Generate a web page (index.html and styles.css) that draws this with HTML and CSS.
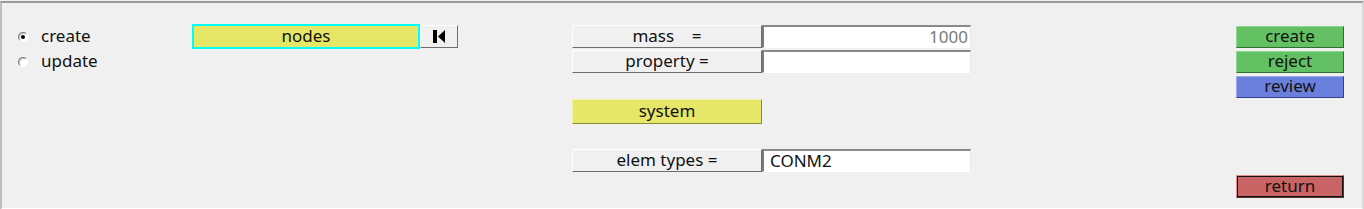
FILE: index.html
```html
<!DOCTYPE html>
<html>
<head>
<meta charset="utf-8">
<link rel="stylesheet" href="styles.css">
</head>
<body>
<div class="panel">
  <div class="col col-radio">
    <label class="radio-row"><span class="radio on"></span><span class="rlabel">create</span></label>
    <label class="radio-row"><span class="radio"></span><span class="rlabel">update</span></label>
  </div>
  <div class="col col-sel">
    <div class="sel-row">
      <div class="btn yellow active">nodes</div>
      <div class="btn icon-btn"><svg width="13" height="13" viewBox="0 0 13 13"><rect x="0" y="0" width="4" height="13" fill="#000"/><polygon points="12,0 12,13 5,6.5" fill="#000"/></svg></div>
    </div>
  </div>
  <div class="col col-form">
    <div class="frow"><div class="btn lbl pre">mass    =</div><div class="field num">1000</div></div>
    <div class="frow"><div class="btn lbl">property =</div><div class="field"></div></div>
    <div class="frow gap1"><div class="btn lbl yellow">system</div></div>
    <div class="frow gap2"><div class="btn lbl">elem types =</div><div class="field txt">CONM2</div></div>
  </div>
  <div class="col col-act">
    <div class="btn act green">create</div>
    <div class="btn act green">reject</div>
    <div class="btn act blue">review</div>
    <div class="spacer"></div>
    <div class="btn act red">return</div>
  </div>
</div>
</body>
</html>
```

FILE: styles.css
```css
html, body {
  margin: 0;
  padding: 0;
  background: #f0f0f0;
}
body {
  font-family: "Noto Sans", "DejaVu Sans", sans-serif;
  font-size: 17px;
  color: #111;
}
.panel {
  box-sizing: border-box;
  width: 1364px;
  height: 209px;
  margin-top: 1px;
  border-top: 2px solid #9a9a9a;
  border-left: 2px solid #bdbdbd;
  border-right: 2px solid #d8d8d8;
  border-bottom: 2px solid #ffffff;
  display: flex;
  padding-top: 19px;
}
.col { display: flex; flex-direction: column; }
.col-radio { width: 190px; padding-left: 16px; box-sizing: border-box; padding-top: 2px; }
.radio-row {
  display: flex;
  align-items: center;
  height: 25px;
}
.radio {
  box-sizing: border-box;
  width: 10px;
  height: 10px;
  border-radius: 50%;
  background: #fff;
  border: 1px solid;
  border-color: #7a7a7a #ffffff #ffffff #7a7a7a;
  box-shadow: inset 1px 1px 0 #c0c0c0;
  position: relative;
  margin-right: 13px;
}
.radio.on::after {
  content: "";
  position: absolute;
  left: 2px; top: 2px;
  width: 4px; height: 4px;
  border-radius: 50%;
  background: #000;
}
.rlabel { line-height: 22px; padding-bottom: 2px; }
.col-sel { width: 380px; padding-top: 2px; }
.sel-row { display: flex; align-items: flex-start; }
.btn {
  box-sizing: border-box;
  display: flex;
  align-items: center;
  justify-content: center;
  height: 23px;
  border: 1px solid;
  border-color: #ffffff #6e6e6e #6e6e6e #ffffff;
  background: #f0f0f0;
  white-space: pre;
  line-height: 20px;
  padding-bottom: 2px;
}
.yellow { background: #e6e667; border-color: #f4f4a8 #8a8a3a #8a8a3a #f4f4a8; }
.active {
  width: 228px;
  height: 25px;
  border: 2px solid #00ffff;
}
.icon-btn { width: 38px; margin-top: 1px; padding-bottom: 0; }
.col-form { width: 664px; padding-top: 3px; }
.frow { display: flex; height: 23px; margin-bottom: 2px; }
.gap1 { margin-top: 24px; height: 25px; }
.gap1 .btn { height: 25px; }
.gap2 { margin-top: 23px; }
.lbl { width: 190px; }
.field {
  box-sizing: border-box;
  width: 209px;
  height: 23px;
  background: #fff;
  border-top: 2px solid #8a8a8a;
  border-left: 2px solid #7a7a7a;
  border-right: 1px solid #e8e8e8;
  border-bottom: 1px solid #ffffff;
  display: flex;
  align-items: center;
  padding: 0 6px 1px;
}
.num { justify-content: flex-end; color: #7a7a7a; padding-right: 2px; }
.txt { color: #111; }
.col-act { width: 108px; padding-top: 4px; }
.act { width: 108px; height: 22px; margin-bottom: 3px; }
.green { background: #63c163; border-color: #8fd88f #2f6f2f #2f6f2f #8fd88f; }
.blue { background: #6b80dd; border-color: #98a8ec #34448c #34448c #98a8ec; }
.spacer { height: 74px; }
.red {
  background: #c86464;
  border: 1px solid;
  border-color: #d89090 #5a3030 #5a3030 #d89090;
  box-shadow: inset 0 0 0 1px #111;
  height: 23px;
}
```
